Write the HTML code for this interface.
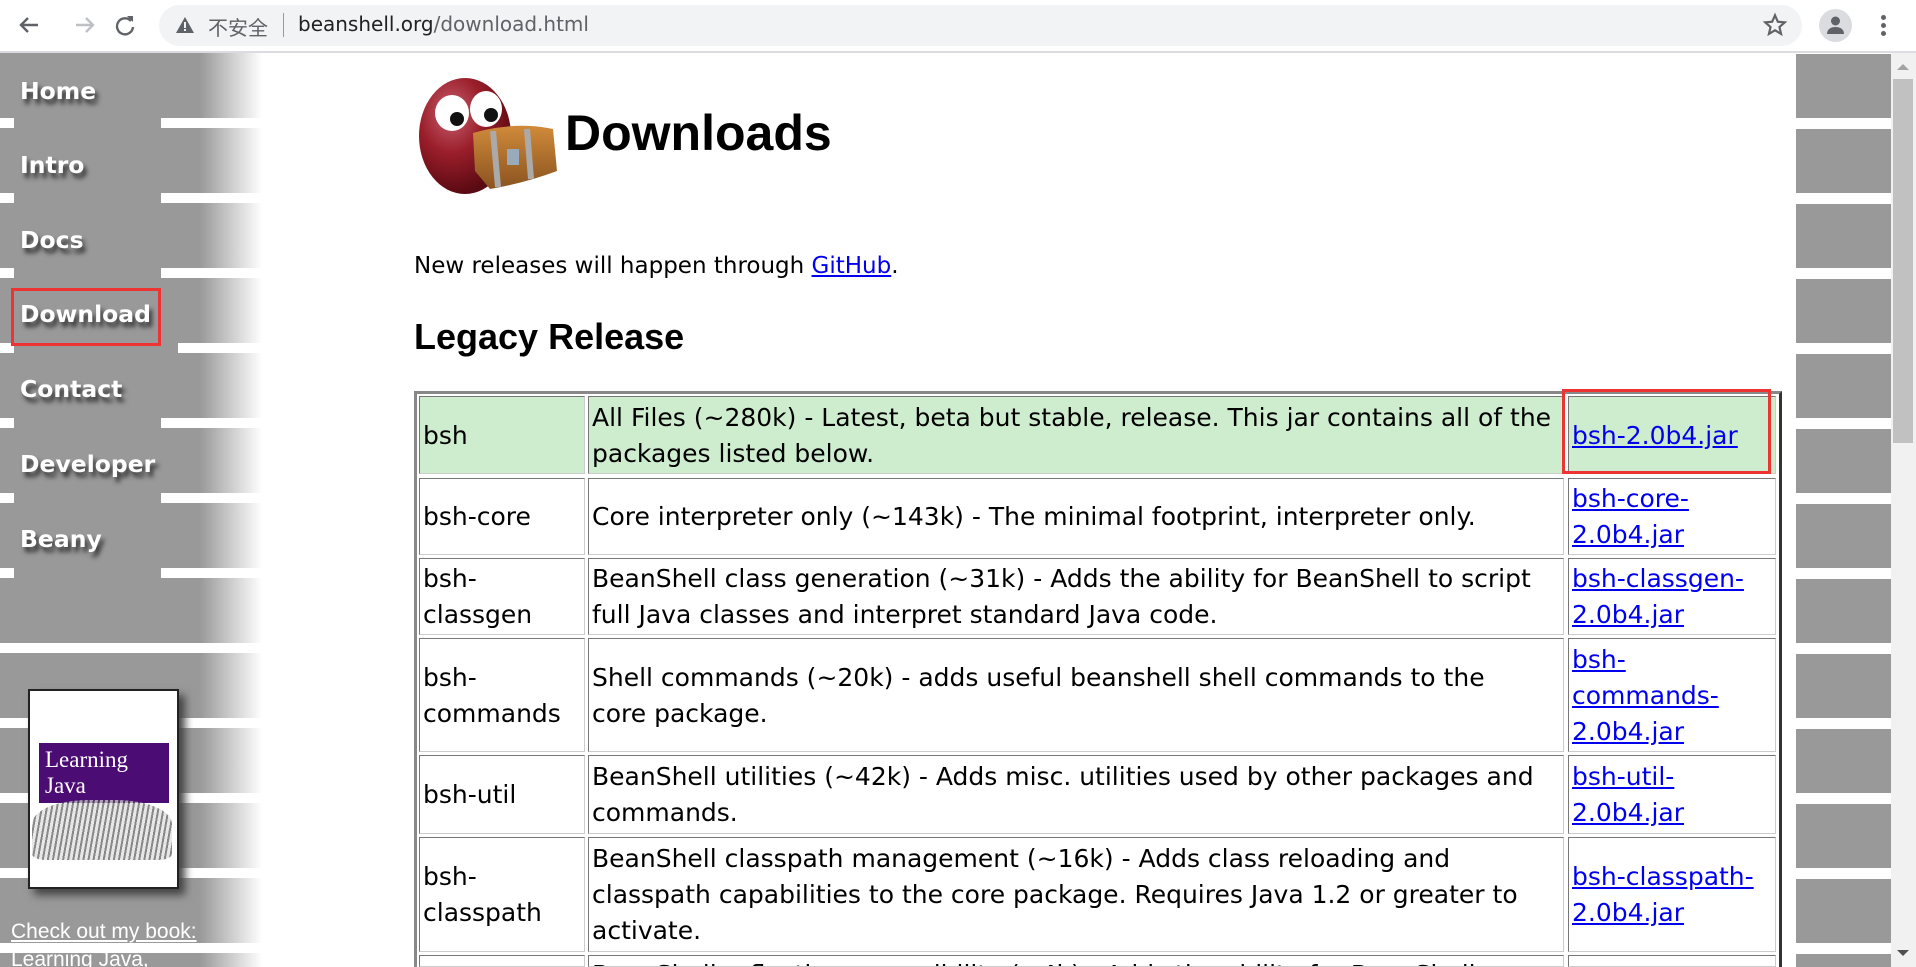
<!DOCTYPE html>
<html style="overflow:hidden;width:1916px;height:967px"><head><meta charset="utf-8"><style>
*{margin:0;padding:0;box-sizing:border-box}
body{width:1916px;height:967px;overflow:hidden;background:#fff;font-family:"Liberation Sans","Noto Sans CJK SC",sans-serif}
#w{position:relative;width:1916px;height:967px;overflow:hidden}
.abs{position:absolute}
.chrome{left:0;top:0;width:1916px;height:53px;background:#fff;border-bottom:2px solid #dadce0}
.addr{left:159px;top:5px;width:1643px;height:41px;background:#f1f3f4;border-radius:21px}
.side{left:0;top:53px;width:262px;height:914px;background:linear-gradient(to right,#999 0,#999 200px,#fff 262px)}
.bar{height:10px;background:#fff;left:0}
.menu{color:#fff;font-family:"DejaVu Sans",sans-serif;font-weight:bold;font-size:23.5px;text-shadow:3px 5px 5px #333;left:20px}
.rblk{left:1796px;width:95px;height:64px;background:#999}
.cell{position:absolute;border:1px solid;border-color:#777 #ccc #ccc #777;padding:1px 3px 0;font-family:"DejaVu Sans",sans-serif;font-size:25px;line-height:36px;color:#000;display:flex;align-items:center;white-space:nowrap;overflow:hidden}
.cell a{color:#00e;text-decoration:underline}
.g{background:#ceecce}
</style></head><body><div id="w">
<div class="abs chrome"></div>
<svg class="abs" style="left:14px;top:12px" width="90" height="30" viewBox="0 0 90 30">
<path d="M24 13H8M14 6l-7 7 7 7" stroke="#5f6368" stroke-width="2.4" fill="none"/>
<path d="M62 13H78M72 6l7 7-7 7" stroke="#bdc1c6" stroke-width="2.4" fill="none"/>
</svg>
<svg class="abs" style="left:112px;top:13px" width="26" height="26" viewBox="0 0 26 26"><path d="M19 8A8 8 0 1 0 21 14" stroke="#5f6368" stroke-width="2.4" fill="none"/><path d="M15 3l6 0 0 6z" fill="#5f6368"/></svg>
<div class="abs addr"></div>
<svg class="abs" style="left:175px;top:15px" width="20" height="20" viewBox="0 0 20 20"><path d="M10 2L19 18H1z" fill="#5f6368"/><rect x="9" y="7" width="2" height="6" fill="#f1f3f4"/><rect x="9" y="14" width="2" height="2" fill="#f1f3f4"/></svg>
<div class="abs" style="left:208px;top:12px;font-size:20px;color:#5f6368">不安全</div>
<div class="abs" style="left:283px;top:13px;width:1px;height:24px;background:#999"></div>
<div class="abs" style="left:298px;top:12px;font-size:20px;font-family:'DejaVu Sans',sans-serif;color:#202124">beanshell.org<span style="color:#5f6368">/download.html</span></div>
<svg class="abs" style="left:1762px;top:12px" width="26" height="26" viewBox="0 0 24 24"><path d="M12 3l2.6 6 6.4.6-4.9 4.3 1.5 6.3L12 16.9 6.4 20.2l1.5-6.3L3 9.6l6.4-.6z" fill="none" stroke="#5f6368" stroke-width="2"/></svg>
<div class="abs" style="left:1819px;top:9px;width:33px;height:33px;border-radius:50%;background:#dadce0"></div>
<svg class="abs" style="left:1823px;top:13px" width="25" height="25" viewBox="0 0 25 25"><circle cx="12.5" cy="8" r="4.5" fill="#5f6368"/><path d="M4 21c0-5 4-7 8.5-7s8.5 2 8.5 7z" fill="#5f6368"/></svg>
<div class="abs" style="left:1881px;top:15px;width:5px;height:5px;border-radius:50%;background:#5f6368;box-shadow:0 8px 0 #5f6368,0 16px 0 #5f6368"></div>

<div class="abs side"></div>
<div class="abs bar" style="top:118px;width:14px"></div><div class="abs bar" style="top:118px;left:161px;width:101px"></div>
<div class="abs bar" style="top:193px;width:14px"></div><div class="abs bar" style="top:193px;left:161px;width:101px"></div>
<div class="abs bar" style="top:268px;width:14px"></div><div class="abs bar" style="top:268px;left:161px;width:101px"></div>
<div class="abs bar" style="top:343px;width:14px"></div><div class="abs bar" style="top:343px;left:178px;width:84px"></div>
<div class="abs bar" style="top:418px;width:14px"></div><div class="abs bar" style="top:418px;left:161px;width:101px"></div>
<div class="abs bar" style="top:493px;width:14px"></div><div class="abs bar" style="top:493px;left:161px;width:101px"></div>
<div class="abs bar" style="top:568px;width:14px"></div><div class="abs bar" style="top:568px;left:161px;width:101px"></div>
<div class="abs bar" style="top:643px;width:262px"></div>
<div class="abs bar" style="top:718px;width:262px"></div>
<div class="abs bar" style="top:793px;width:262px"></div>
<div class="abs bar" style="top:868px;width:262px"></div>
<div class="abs bar" style="top:943px;width:262px"></div>
<div class="abs menu" style="top:77px">Home</div>
<div class="abs menu" style="top:151px">Intro</div>
<div class="abs menu" style="top:226px">Docs</div>
<div class="abs menu" style="top:300px">Download</div>
<div class="abs menu" style="top:375px">Contact</div>
<div class="abs menu" style="top:450px">Developer</div>
<div class="abs menu" style="top:525px">Beany</div>
<div class="abs" style="left:11px;top:288px;width:150px;height:58px;border:3px solid #e33"></div>
<div class="abs" style="left:28px;top:689px;width:151px;height:200px;background:#fff;border:2px solid #222;box-shadow:6px 6px 8px #444"></div>
<div class="abs" style="left:39px;top:743px;width:130px;height:60px;background:#4b0c74;color:#fff;font-family:'Liberation Serif',serif;font-size:23px;line-height:26px;padding:4px 6px">Learning<br>Java</div>
<div class="abs" style="left:32px;top:800px;width:140px;height:60px;background:repeating-linear-gradient(100deg,#555 0 2px,#ddd 2px 5px);opacity:.7;border-radius:40% 40% 10% 10%"></div>
<div class="abs" style="left:11px;top:918px;height:49px;overflow:hidden;color:#fff;font-size:21px;text-decoration:underline;line-height:28px">Check out my book:<br>Learning Java,</div>

<div class="abs rblk" style="top:54px"></div><div class="abs rblk" style="top:129px"></div><div class="abs rblk" style="top:204px"></div><div class="abs rblk" style="top:279px"></div><div class="abs rblk" style="top:354px"></div><div class="abs rblk" style="top:429px"></div><div class="abs rblk" style="top:504px"></div><div class="abs rblk" style="top:579px"></div><div class="abs rblk" style="top:654px"></div><div class="abs rblk" style="top:729px"></div><div class="abs rblk" style="top:804px"></div><div class="abs rblk" style="top:879px"></div><div class="abs rblk" style="top:954px;height:13px"></div>
<div class="abs" style="left:1891px;top:53px;width:25px;height:914px;background:#f1f1f1"></div>
<div class="abs" style="left:1893px;top:79px;width:20px;height:364px;background:#c1c1c1"></div>
<svg class="abs" style="left:1896px;top:62px" width="14" height="10"><path d="M1 8L7 2 13 8z" fill="#a3a3a3"/></svg>
<svg class="abs" style="left:1896px;top:948px" width="14" height="10"><path d="M1 2L7 8 13 2z" fill="#505050"/></svg>

<svg class="abs" style="left:415px;top:71px" width="150" height="135" viewBox="0 0 150 135">
<defs><radialGradient id="r" cx="35%" cy="30%" r="70%"><stop offset="0" stop-color="#c86070"/><stop offset=".5" stop-color="#9a1e2a"/><stop offset="1" stop-color="#5a0a12"/></radialGradient>
<linearGradient id="c" x1="0" y1="0" x2="0" y2="1"><stop offset="0" stop-color="#d08a3a"/><stop offset="1" stop-color="#8a5320"/></linearGradient></defs>
<ellipse cx="50" cy="65" rx="46" ry="58" fill="url(#r)"/>
<ellipse cx="37" cy="42" rx="17" ry="18" fill="#fff"/><ellipse cx="71" cy="38" rx="16" ry="18" fill="#fff"/>
<circle cx="42" cy="48" r="7" fill="#111"/><circle cx="76" cy="44" r="7" fill="#111"/>
<path d="M58 62Q100 50 138 58L142 100Q110 112 75 118L60 100z" fill="url(#c)"/>
<path d="M78 60l5 56M112 58l4 50" stroke="#aaa" stroke-width="6"/>
<rect x="92" y="78" width="12" height="16" fill="#9ab"/>
</svg>
<div class="abs" style="left:565px;top:104px;font-size:50px;font-weight:bold">Downloads</div>
<div class="abs" style="left:414px;top:253px;font-size:23px;font-family:'DejaVu Sans',sans-serif">New releases will happen through <a style="color:#00e;text-decoration:underline">GitHub</a>.</div>
<div class="abs" style="left:414px;top:316px;font-size:36px;font-weight:bold">Legacy Release</div>

<div class="abs" style="left:414px;top:391px;width:1368px;height:580px;border:3px solid;border-color:#888 #333 #333 #888"></div>
<div class="cell g" style="left:419px;top:396px;width:166px;height:78px">bsh</div>
<div class="cell g" style="left:588px;top:396px;width:976px;height:78px">All Files (~280k) - Latest, beta but stable, release. This jar contains all of the<br>packages listed below.</div>
<div class="cell g" style="left:1568px;top:396px;width:208px;height:78px"><a>bsh-2.0b4.jar</a></div>
<div class="cell" style="left:419px;top:478px;width:166px;height:77px">bsh-core</div>
<div class="cell" style="left:588px;top:478px;width:976px;height:77px">Core interpreter only (~143k) - The minimal footprint, interpreter only.</div>
<div class="cell" style="left:1568px;top:478px;width:208px;height:77px"><a>bsh-core-<br>2.0b4.jar</a></div>
<div class="cell" style="left:419px;top:558px;width:166px;height:77px">bsh-<br>classgen</div>
<div class="cell" style="left:588px;top:558px;width:976px;height:77px">BeanShell class generation (~31k) - Adds the ability for BeanShell to script<br>full Java classes and interpret standard Java code.</div>
<div class="cell" style="left:1568px;top:558px;width:208px;height:77px"><a>bsh-classgen-<br>2.0b4.jar</a></div>
<div class="cell" style="left:419px;top:638px;width:166px;height:114px">bsh-<br>commands</div>
<div class="cell" style="left:588px;top:638px;width:976px;height:114px">Shell commands (~20k) - adds useful beanshell shell commands to the<br>core package.</div>
<div class="cell" style="left:1568px;top:638px;width:208px;height:114px"><a>bsh-<br>commands-<br>2.0b4.jar</a></div>
<div class="cell" style="left:419px;top:755px;width:166px;height:79px">bsh-util</div>
<div class="cell" style="left:588px;top:755px;width:976px;height:79px">BeanShell utilities (~42k) - Adds misc. utilities used by other packages and<br>commands.</div>
<div class="cell" style="left:1568px;top:755px;width:208px;height:79px"><a>bsh-util-<br>2.0b4.jar</a></div>
<div class="cell" style="left:419px;top:837px;width:166px;height:115px">bsh-<br>classpath</div>
<div class="cell" style="left:588px;top:837px;width:976px;height:115px">BeanShell classpath management (~16k) - Adds class reloading and<br>classpath capabilities to the core package. Requires Java 1.2 or greater to<br>activate.</div>
<div class="cell" style="left:1568px;top:837px;width:208px;height:115px"><a>bsh-classpath-<br>2.0b4.jar</a></div>
<div class="cell" style="left:419px;top:955px;width:166px;height:12px"></div>
<div class="cell" style="left:588px;top:955px;width:976px;height:12px;align-items:flex-start">BeanShell reflective accessibility (~4k) - Adds the ability for BeanShell</div>
<div class="cell" style="left:1568px;top:955px;width:208px;height:12px"></div>
<div class="abs" style="left:1562px;top:389px;width:209px;height:85px;border:3px solid #e33"></div>
</div></body></html>
